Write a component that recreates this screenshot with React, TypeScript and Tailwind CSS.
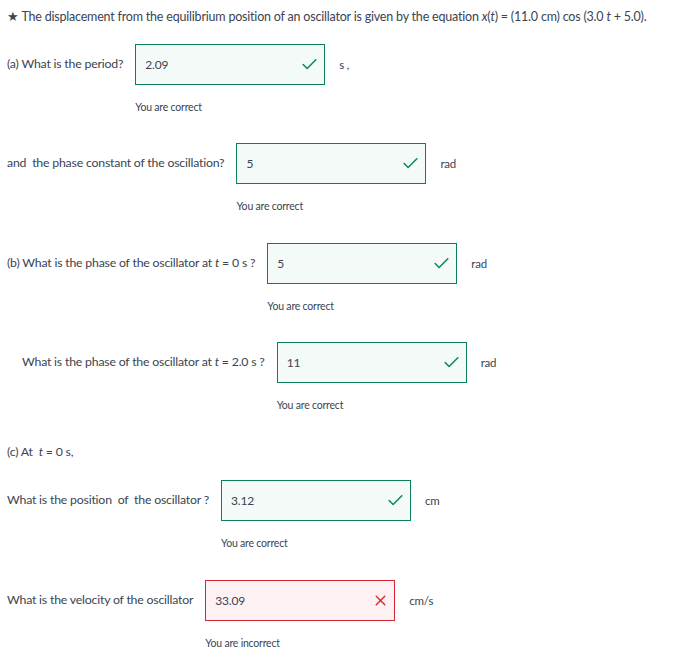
import React from 'react';
import { Check, X } from 'lucide-react';

type Status = 'correct' | 'incorrect';

interface RowProps {
  label: React.ReactNode;
  value: string;
  unit: string;
  status: Status;
  indent?: string;
  className?: string;
}

const AnswerRow: React.FC<RowProps> = ({ label, value, unit, status, indent = 'pl-0', className = '' }) => {
  const ok = status === 'correct';
  return (
    <div className={`flex items-start ${indent} ${className}`}>
      <div className="h-[41px] flex items-center text-[12.3px] text-[#3a4452] whitespace-pre">{label}</div>
      <div className="flex flex-col ml-[12px]">
        <div
          className={`w-[190px] h-[41px] flex items-center justify-between pl-[9px] pr-[5px] border ${
            ok ? 'border-[#0b7f5c] bg-[#f4faf8]' : 'border-[#d9252f] bg-[#fdf1f3]'
          }`}
        >
          <span className="text-[12px] text-[#3a4452]">{value}</span>
          {ok ? (
            <Check size={19} strokeWidth={2} className="text-[#0b8a5f]" />
          ) : (
            <X size={17} strokeWidth={2} className="text-[#d9252f]" />
          )}
        </div>
        <div className="mt-[15px] h-[14px] leading-[14px] text-[10.5px] text-[#3a4452]">
          {ok ? 'You are correct' : 'You are incorrect'}
        </div>
      </div>
      <div className="h-[41px] flex items-center ml-[14px] text-[11.5px] text-[#3a4452]">{unit}</div>
    </div>
  );
};

const I: React.FC<{ children: React.ReactNode }> = ({ children }) => <span className="italic">{children}</span>;

export default function App() {
  return (
    <div
      className="w-[677px] h-[670px] bg-white pl-[7px] overflow-hidden"
      style={{ fontFamily: 'Lato, "Noto Sans", sans-serif', letterSpacing: '-0.2px' }}
    >
      <div className="pt-[8px] h-[44px] text-[12.5px] text-[#3a4452] whitespace-nowrap">
        ★ The displacement from the equilibrium position of an oscillator is given by the equation <I>x</I>(<I>t</I>) = (11.0 cm) cos (3.0 <I>t</I> + 5.0).
      </div>

      <AnswerRow label="(a) What is the period?" value="2.09" unit="s ," status="correct" />

      <AnswerRow
        className="mt-[29px]"
        label="and  the phase constant of the oscillation?"
        value="5"
        unit="rad"
        status="correct"
      />

      <AnswerRow
        className="mt-[30px]"
        label={<>(b) What is the phase of the oscillator at <I>t</I> = 0 s ?</>}
        value="5"
        unit="rad"
        status="correct"
      />

      <AnswerRow
        className="mt-[29px]"
        indent="pl-[15px]"
        label={<>What is the phase of the oscillator at <I>t</I> = 2.0 s ?</>}
        value="11"
        unit="rad"
        status="correct"
      />

      <div className="mt-[30px] h-[20px] leading-[20px] text-[12.3px] text-[#3a4452] whitespace-pre">
        (c) At  <I>t</I> = 0 s,
      </div>

      <AnswerRow
        className="mt-[18px]"
        label="What is the position  of  the oscillator ?"
        value="3.12"
        unit="cm"
        status="correct"
      />

      <AnswerRow
        className="mt-[30px]"
        label="What is the velocity of the oscillator"
        value="33.09"
        unit="cm/s"
        status="incorrect"
      />
    </div>
  );
}
